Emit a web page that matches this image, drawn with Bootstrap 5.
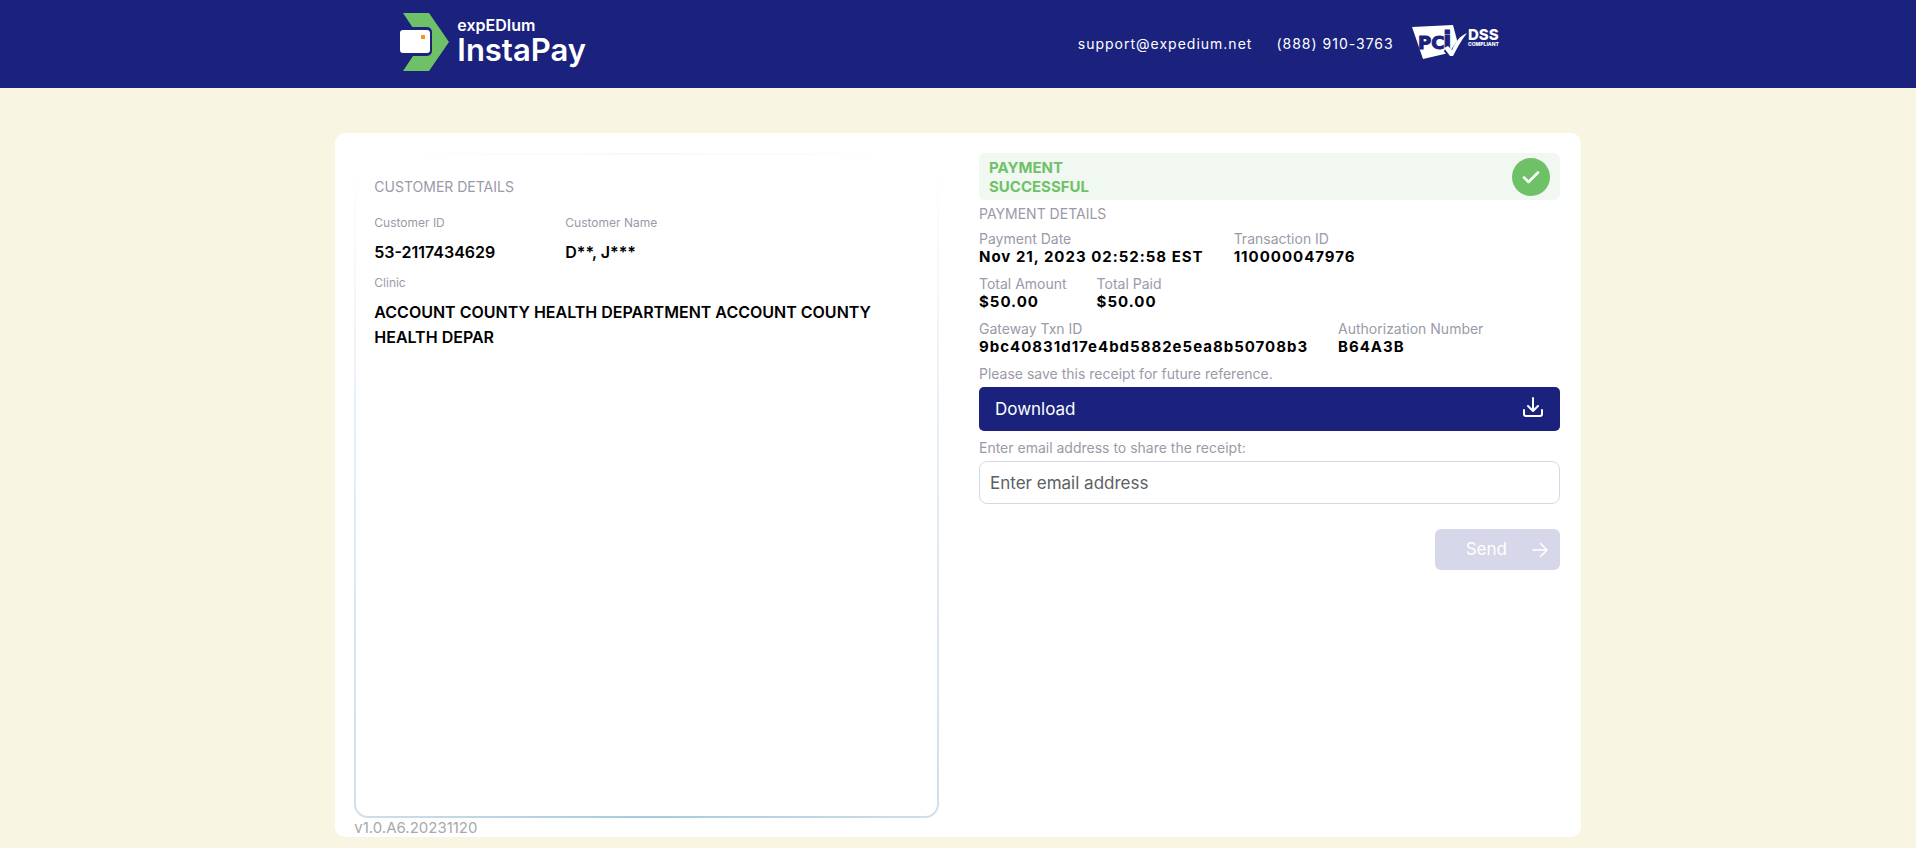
<!DOCTYPE html>
<html lang="en">
<head>
<meta charset="utf-8">
<meta name="viewport" content="width=device-width, initial-scale=1">
<title>expEDIum InstaPay</title>
<link href="https://cdn.jsdelivr.net/npm/bootstrap@5.3.0/dist/css/bootstrap.min.css" rel="stylesheet">
<style>
  :root { --navy: #1a227e; --green: #6fc168; --muted: #9a9aa8; --line: #d6d7e8; }
  body { background: #f9f5e3; color: #000; font-family: Inter, "Noto Sans", sans-serif; font-size: 16px; }
  .topbar { background: var(--navy); min-height: 88px; padding-bottom: 4px; }
  .shell { width: 65%; min-width: 320px; margin-left: auto; margin-right: auto; }
  .topbar .shell { padding: 0 79px 0 64px; }
  .brand-text { padding-top: 2px; }
  .brand-small { font-size: 16px; line-height: 14px; font-weight: 600; }
  .brand-big { font-size: 31px; line-height: 36px; font-weight: 600; }
  .contact a { color: #fff; text-decoration: none; font-size: 14px; line-height: 20px; padding-top: 3px; letter-spacing: 1px; }
  .sheet { background: #fff; border-radius: 10px; padding: 20px 21px 0 19px; margin-top: 45px; margin-bottom: 11px; }
  .col-customer { padding-right: 18px; }
  .col-payment { padding-left: 22px; }
  .panel { border: 2px solid transparent; border-radius: 14px; padding: 22px 18px;
    background: linear-gradient(#fff, #fff) padding-box,
      radial-gradient(ellipse 50% 8% at 50% 100%, #a9cadd, transparent) border-box,
      radial-gradient(ellipse 45% 2% at 50% 0, #f8f8fa, transparent) border-box,
      linear-gradient(to top, #cfdfec, #dce8f2 35%, #e9f1f8 65%, #f8f9fc 85%, #fff 98%) border-box; }
  .heading-text { font-size: 14px; line-height: 20px; color: var(--muted); margin: 0; font-weight: 400; }
  .heading-payment { margin: 4px 0 6px; }
  .customer dt { font-size: 12px; line-height: 20px; font-weight: 400; color: var(--muted); margin-bottom: 7px; }
  .customer dd { font-size: 16px; line-height: 25px; font-weight: 600; margin-bottom: 8px; }
  .customer-row { column-gap: 70px; }
  .status { background: #f1f8f1; color: var(--green); border-radius: 6px; min-height: 47px; padding: 4px 10px; font-size: 15px; line-height: 19px; font-weight: 700; }
  .receipt dt, .hint { font-size: 14px; line-height: 18px; font-weight: 400; color: var(--muted); }
  .receipt dd { font-size: 15px; line-height: 18px; font-weight: 700; letter-spacing: 1px; margin: 0; }
  .receipt { display: flex; column-gap: 30px; margin: 0 0 9px; }
  .btn-download, .btn-download:hover { background: var(--navy); color: #fff; height: 44px; padding: 2px 16px 0; font-size: 17px; border: 0; border-radius: 5px; }
  .email { height: 43px; border: 1px solid var(--line); border-radius: 8px; padding: 0 10px; font-size: 17px; }
  .email::placeholder { color: #5c5f64; }
  .send-row { margin-top: 25px; }
  .btn-send, .btn-send:disabled { background: var(--line); color: #fff; opacity: 1; border: 0; border-radius: 6px; width: 125px; height: 41px; padding: 0 12px 0 31px; font-size: 17px; }
  .version { font-size: 15px; line-height: 19px; color: #a9a9a9; }
</style>
</head>
<body class="d-flex flex-column min-vh-100">
<header class="topbar d-flex align-items-center">
  <div class="shell d-flex align-items-center justify-content-between">
    <a class="d-flex align-items-center text-white text-decoration-none gap-2" href="#">
      <svg width="50" height="60" viewBox="0 0 50 60" aria-hidden="true">
        <path d="M4 1H30L50 30 30 59H4L14 44V16Z" fill="#6fc168"/>
        <rect x="-2" y="15" width="35" height="29" rx="5" fill="#1a227e"/>
        <rect x="1" y="18" width="30" height="23" rx="3" fill="#fff"/>
        <rect x="22" y="23" width="4" height="4" fill="#f7941d"/>
      </svg>
      <span class="brand-text d-flex flex-column">
        <span class="brand-small">expEDIum</span>
        <span class="brand-big">InstaPay</span>
      </span>
    </a>
    <div class="contact d-flex align-items-center">
      <a class="me-4" href="mailto:support@expedium.net">support@expedium.net</a>
      <a class="me-3" href="tel:+18889103763">(888) 910-3763</a>
      <svg width="92" height="36" viewBox="0 0 92 36" role="img" aria-label="PCI DSS compliant">
        <path d="M2 3 43 1 48 20 43 28 13 35Z" fill="#fff"/>
        <g font-family="DejaVu Sans" font-weight="700" fill="#1a227e" stroke="#1a227e">
          <text x="8" y="25" font-size="18">PC</text>
          <text x="33" y="25" font-size="25">i</text>
        </g>
        <path d="M36 25 41 31 55 11" fill="none" stroke="#1a227e" stroke-width="6"/>
        <path d="M34 24 38 22 42 26C46 17 50 12 57 9 51 17 47 24 43 32H40Z" fill="#fff"/>
        <text x="58" y="16" font-family="Inter" font-weight="800" font-size="15" fill="#fff">DSS</text>
        <text x="58" y="22" font-family="Inter" font-weight="800" font-size="5" fill="#fff">COMPLIANT</text>
      </svg>
    </div>
  </div>
</header>
<main class="shell sheet flex-grow-1 d-flex flex-column">
  <div class="row flex-grow-1 gx-0">
    <section class="col-6 d-flex col-customer">
      <div class="panel flex-grow-1">
        <h2 class="heading-text mb-3">CUSTOMER DETAILS</h2>
        <div class="customer">
          <div class="d-flex customer-row">
            <dl class="mb-0"><dt>Customer ID</dt><dd>53-2117434629</dd></dl>
            <dl class="mb-0"><dt>Customer Name</dt><dd>D**, J***</dd></dl>
          </div>
          <dl class="mb-0"><dt>Clinic</dt><dd>ACCOUNT COUNTY HEALTH DEPARTMENT ACCOUNT COUNTY HEALTH DEPAR</dd></dl>
        </div>
      </div>
    </section>
    <section class="col-6 col-payment">
      <div class="status d-flex align-items-center justify-content-between">
        <span>PAYMENT<br>SUCCESSFUL</span>
        <svg width="38" height="38" viewBox="0 0 38 38" aria-hidden="true">
          <circle cx="19" cy="19" r="19" fill="#6fc168"/>
          <path d="M12 19.500 16.500 24 26 14.500" fill="none" stroke="#fff" stroke-width="2.500" stroke-linecap="round" stroke-linejoin="round"/>
        </svg>
      </div>
      <h2 class="heading-text heading-payment">PAYMENT DETAILS</h2>
      <div class="receipt"><dl class="mb-0"><dt>Payment Date</dt><dd>Nov 21, 2023 02:52:58 EST</dd></dl><dl class="mb-0"><dt>Transaction ID</dt><dd>110000047976</dd></dl></div>
      <div class="receipt"><dl class="mb-0"><dt>Total Amount</dt><dd>$50.00</dd></dl><dl class="mb-0"><dt>Total Paid</dt><dd>$50.00</dd></dl></div>
      <div class="receipt"><dl class="mb-0"><dt>Gateway Txn ID</dt><dd>9bc40831d17e4bd5882e5ea8b50708b3</dd></dl><dl class="mb-0"><dt>Authorization Number</dt><dd>B64A3B</dd></dl></div>
      <p class="hint mb-1">Please save this receipt for future reference.</p>
      <button type="button" class="btn btn-download w-100 d-flex align-items-center justify-content-between mb-2">Download
        <svg class="mb-1" width="22" height="24" viewBox="0 0 22 24" fill="none" stroke="#fff" stroke-width="2" stroke-linecap="round" stroke-linejoin="round" aria-hidden="true"><path d="M11 2V15M6 10 11 15 16 10M2 14V18Q2 20 4 20H18Q20 20 20 18V14"/></svg>
      </button>
      <label class="hint d-block mb-1" for="email">Enter email address to share the receipt:</label>
      <input class="form-control email" id="email" type="email" placeholder="Enter email address">
      <div class="send-row d-flex justify-content-end">
        <button type="button" class="btn btn-send d-flex align-items-center justify-content-between" disabled>Send
          <svg width="16" height="16" viewBox="0 0 16 16" fill="none" stroke="#fff" stroke-width="1.500" stroke-linecap="round" stroke-linejoin="round" aria-hidden="true"><path d="M1 8H15M8.500 1.500 15 8 8.500 14.500"/></svg>
        </button>
      </div>
    </section>
  </div>
  <footer class="version">v1.0.A6.20231120</footer>
</main>
<script src="https://cdn.jsdelivr.net/npm/bootstrap@5.3.0/dist/js/bootstrap.bundle.min.js"></script>
</body>
</html>
